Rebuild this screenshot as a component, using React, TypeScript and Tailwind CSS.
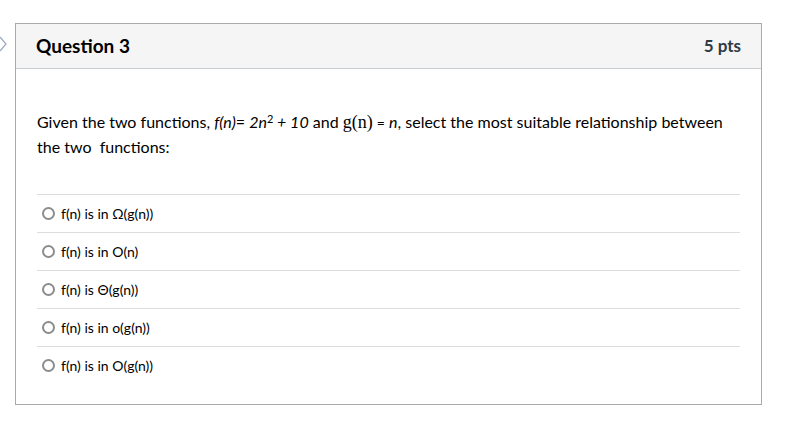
export default function App() {
  const options = [
    'f(n) is in Ω(g(n))',
    'f(n) is in O(n)',
    'f(n) is Θ(g(n))',
    'f(n) is in o(g(n))',
    'f(n) is in O(g(n))',
  ];

  return (
    <div className="relative h-[428px] w-[800px] bg-white text-[#2d3b45]" style={{ fontFamily: 'Lato, "Open Sans", sans-serif' }}>
      <svg className="absolute left-0 top-[36px]" width="8" height="16" viewBox="0 0 8 16">
        <path d="M0 1 L6 8 L0 15" fill="none" stroke="#9aa8c4" strokeWidth="1.2" />
      </svg>
      <div className="pt-[23px] pl-[15px]">
        <div className="w-[747px] h-[382px] border border-[#aaaaaa] flex flex-col">
          <div className="h-[45px] bg-[#f5f5f5] border-b border-[#c7cdd1] flex items-center justify-between pl-[20px] pr-[20px]">
            <span className="text-[19px] font-bold text-black">Question 3</span>
            <span className="text-[17px] font-bold text-[#2d3b45]">5 pts</span>
          </div>
          <div className="px-[21px] pt-[40px]">
            <p className="text-[16px] leading-[25px] text-black pr-[8px]">
              Given the two functions, <i>f(n)</i>= <i>2n<sup className="text-[11px] not-italic leading-none">2</sup> + 10</i> and{' '}
              <span className="text-[18px] leading-none" style={{ fontFamily: '"Liberation Serif", serif' }}>g(n)</span>{' '}
              <span className="text-[14px] leading-none">=</span> <i>n</i>, select the most suitable relationship between the two&nbsp; functions:
            </p>
            <div className="mt-[35px]">
              {options.map((o) => (
                <div key={o} className="h-[38px] border-t border-[#dddddd] flex items-center pl-[5px]">
                  <span className="w-[13px] h-[13px] rounded-full border-2 border-[#8c8c8c] bg-white mr-[6px]" />
                  <span className="text-[14px] text-black">{o}</span>
                </div>
              ))}
            </div>
          </div>
        </div>
      </div>
    </div>
  );
}
